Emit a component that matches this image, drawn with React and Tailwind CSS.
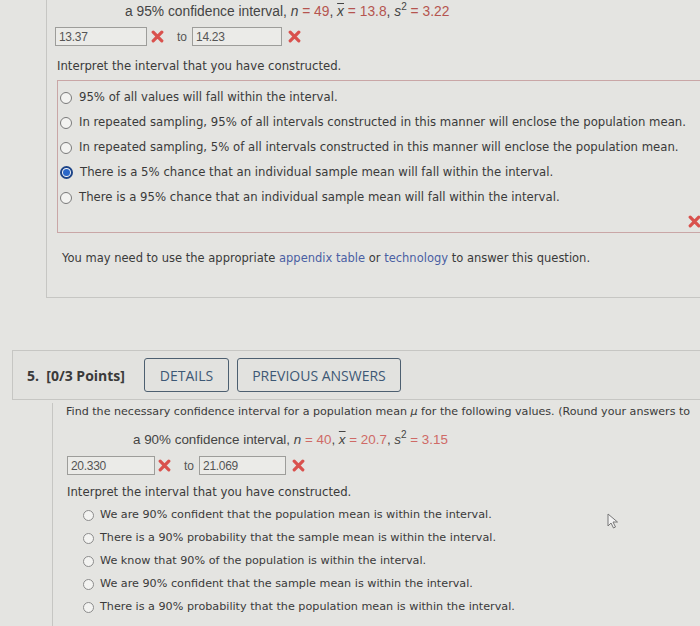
import React from "react";

const XMark = () => (
  <svg width="13" height="13" viewBox="0 0 13 13" className="shrink-0">
    <path d="M2.2 2.2 L10.8 10.8 M10.8 2.2 L2.2 10.8" stroke="#d9514d" strokeWidth="3.2" strokeLinecap="round" />
  </svg>
);

const Radio = ({ checked, small }) =>
  checked ? (
    <span className="shrink-0 w-[13px] h-[13px] rounded-full border-[2px] border-[#1d4487] bg-[#f4f6fb] flex items-center justify-center">
      <span className="w-[7px] h-[7px] rounded-full bg-[#2a67c9]" />
    </span>
  ) : (
    <span
      className={
        small
          ? "shrink-0 w-[11px] h-[11px] rounded-full border-[1.5px] border-[#8c8c8c] bg-[#f3f3f1]"
          : "shrink-0 w-[12px] h-[12px] rounded-full border-[1.5px] border-[#7a7a7a] bg-[#f3f3f1]"
      }
    />
  );

const InputBox = ({ value, w }) => (
  <div
    className={
      "h-[19px] border border-[#9d9d9a] bg-[#ebebe8] flex items-center pl-[3px] font-['Liberation_Sans',sans-serif] text-[12px] text-[#555] tracking-[-0.3px] " +
      w
    }
  >
    {value}
  </div>
);

const opts1 = [
  { t: "95% of all values will fall within the interval." },
  { t: "In repeated sampling, 95% of all intervals constructed in this manner will enclose the population mean." },
  { t: "In repeated sampling, 5% of all intervals constructed in this manner will enclose the population mean." },
  { t: "There is a 5% chance that an individual sample mean will fall within the interval.", c: true },
  { t: "There is a 95% chance that an individual sample mean will fall within the interval." },
];

const opts2 = [
  "We are 90% confident that the population mean is within the interval.",
  "There is a 90% probability that the sample mean is within the interval.",
  "We know that 90% of the population is within the interval.",
  "We are 90% confident that the sample mean is within the interval.",
  "There is a 90% probability that the population mean is within the interval.",
];

export default function App() {
  return (
    <div className="relative w-[700px] h-[626px] overflow-hidden bg-[#e4e4e1] text-[#3a3a3a] font-['DejaVu_Sans',sans-serif]">
      {/* Question 4 container */}
      <div className="ml-[46px] w-[670px] border-l border-b border-[#c6c6c3] pb-[29px]">
        <div className="h-[24px] flex items-center pl-[78px] font-['Liberation_Sans',sans-serif] text-[13.8px] whitespace-nowrap text-[#444]">
          <span>a 95% confidence interval,&nbsp;</span>
          <i>n</i>
          <span className="text-[#b5544f]">&nbsp;=&nbsp;49</span>
          <span>,&nbsp;</span>
          <i className="overline">x</i>
          <span className="text-[#b5544f]">&nbsp;=&nbsp;13.8</span>
          <span>,&nbsp;</span>
          <i>s</i>
          <sup className="text-[10px]">2</sup>
          <span className="text-[#b5544f]">&nbsp;=&nbsp;3.22</span>
        </div>
        <div className="mt-[3px] h-[19px] flex items-center pl-[8px]">
          <InputBox value="13.37" w="w-[92px]" />
          <span className="ml-[4px]"><XMark /></span>
          <span className="ml-[13px] text-[12px] font-['Liberation_Sans',sans-serif] text-[#555]">to</span>
          <span className="ml-[5px]"><InputBox value="14.23" w="w-[90px]" /></span>
          <span className="ml-[6px]"><XMark /></span>
        </div>
        <div className="mt-[12px] h-[18px] flex items-center pl-[10px] text-[11.7px]">
          Interpret the interval that you have constructed.
        </div>
        <div className="mt-[4px] ml-[10px] border border-[#c9a6a6] pt-[4px]">
          {opts1.map((o, i) => (
            <div key={i} className="h-[25px] flex items-center pl-[2px] gap-[7px] text-[11.7px] whitespace-nowrap">
              <Radio checked={o.c} />
              <span>{o.t}</span>
            </div>
          ))}
          <div className="h-[22px] flex items-center justify-end pr-[14px]">
            <XMark />
          </div>
        </div>
        <div className="mt-[17px] h-[18px] flex items-center pl-[15px] text-[11.5px] whitespace-nowrap">
          You may need to use the appropriate&nbsp;
          <span className="text-[#4a5fa3]">appendix table</span>
          &nbsp;or&nbsp;
          <span className="text-[#4a5fa3]">technology</span>
          &nbsp;to answer this question.
        </div>
      </div>

      {/* Question 5 header */}
      <div className="mt-[52px] ml-[12px] h-[50px] border border-r-0 border-[#c6c6c3] bg-[#e2e2df] flex items-center pl-[14px]">
        <div className="w-[117px] font-['Open_Sans',sans-serif] font-bold text-[14px] text-[#3a3a3a] whitespace-nowrap">
          5.&nbsp; [0/3 Points]
        </div>
        <div className="w-[85px] h-[34px] border-[1.5px] border-[#4d5f70] rounded-[3px] flex items-center justify-center font-['Open_Sans',sans-serif] font-medium text-[14px] text-[#3d5875]">
          DETAILS
        </div>
        <div className="ml-[8px] w-[164px] h-[34px] border-[1.5px] border-[#4d5f70] rounded-[3px] flex items-center justify-center font-['Open_Sans',sans-serif] font-medium text-[14px] text-[#3d5875] whitespace-nowrap">
          PREVIOUS ANSWERS
        </div>
      </div>

      {/* Question 5 body */}
      <div className="ml-[52px] h-[224px] border-l border-[#c6c6c3]">
        <div className="mt-[3px] h-[18px] flex items-center pl-[13px] text-[11.1px] whitespace-nowrap">
          Find the necessary confidence interval for a population mean&nbsp;<i>μ</i>&nbsp;for the following values. (Round your answers to
        </div>
        <div className="mt-[7px] h-[24px] flex items-center pl-[80px] font-['Liberation_Sans',sans-serif] text-[13.4px] whitespace-nowrap text-[#444]">
          <span>a 90% confidence interval,&nbsp;</span>
          <i>n</i>
          <span className="text-[#cf6a66]">&nbsp;=&nbsp;40</span>
          <span>,&nbsp;</span>
          <i className="overline">x</i>
          <span className="text-[#cf6a66]">&nbsp;=&nbsp;20.7</span>
          <span>,&nbsp;</span>
          <i>s</i>
          <sup className="text-[10px]">2</sup>
          <span className="text-[#cf6a66]">&nbsp;=&nbsp;3.15</span>
        </div>
        <div className="mt-[4px] h-[19px] flex items-center pl-[14px]">
          <InputBox value="20.330" w="w-[88px]" />
          <span className="ml-[3px]"><XMark /></span>
          <span className="ml-[13px] text-[12px] font-['Liberation_Sans',sans-serif] text-[#555]">to</span>
          <span className="ml-[5px]"><InputBox value="21.069" w="w-[87px]" /></span>
          <span className="ml-[6px]"><XMark /></span>
        </div>
        <div className="mt-[9px] h-[18px] flex items-center pl-[14px] text-[11.7px]">
          Interpret the interval that you have constructed.
        </div>
        <div className="mt-[2px]">
          {opts2.map((t, i) => (
            <div key={i} className="h-[23px] flex items-center pl-[30px] gap-[6px] text-[11.2px] whitespace-nowrap">
              <Radio small />
              <span>{t}</span>
            </div>
          ))}
        </div>
      </div>
      <div className="h-[2px] bg-[#a9cbc8]" />

      {/* mouse cursor */}
      <svg className="absolute left-[607px] top-[513px]" width="12" height="16" viewBox="0 0 12 16">
        <path d="M1 1 L1 13 L4 10 L6.5 15 L8.5 14 L6 9 L10.5 9 Z" fill="#f2f2f2" stroke="#777" strokeWidth="1" strokeLinejoin="round" />
      </svg>
    </div>
  );
}
